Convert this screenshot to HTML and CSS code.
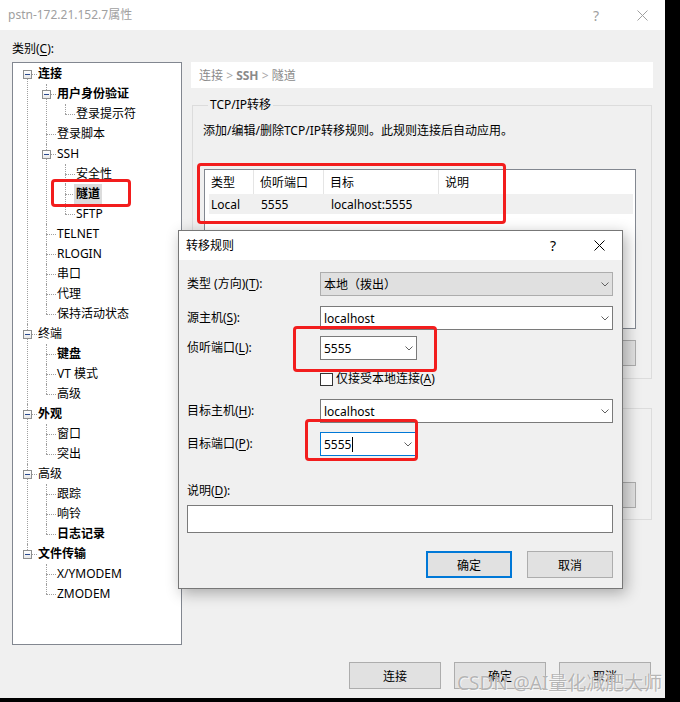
FILE: index.html
```html
<!DOCTYPE html>
<html lang="zh">
<head>
    <meta charset="UTF-8">
    <title>pstn-172.21.152.7属性</title>
    <link rel="stylesheet" href="styles.css">
</head>
<body>
    <div class="window">
        <div class="titlebar inactive">
            <span class="title">pstn-172.21.152.7属性</span>
            <span class="tb-btn">?</span>
            <span class="tb-btn">
                <svg width="11" height="11" viewBox="0 0 11 11"><path d="M0.5 0.5 L10.5 10.5 M10.5 0.5 L0.5 10.5" stroke="#a0a0a0" stroke-width="1" fill="none"/></svg>
            </span>
        </div>

        <div class="main">
            <div class="cat-label">类别(<u>C</u>):</div>
            <div class="content">
                <div class="tree">
                    <ul>
                        <li><div class="row"><span class="toggle"></span><span class="label bold">连接</span></div>
                            <ul>
                                <li><div class="row"><span class="toggle"></span><span class="label bold">用户身份验证</span></div>
                                    <ul>
                                        <li><div class="row leaf"><span class="label">登录提示符</span></div></li>
                                    </ul>
                                </li>
                                <li><div class="row leaf"><span class="label">登录脚本</span></div></li>
                                <li><div class="row"><span class="toggle"></span><span class="label">SSH</span></div>
                                    <ul>
                                        <li><div class="row leaf"><span class="label">安全性</span></div></li>
                                        <li><div class="row leaf"><span class="label bold sel">隧道</span></div></li>
                                        <li><div class="row leaf"><span class="label">SFTP</span></div></li>
                                    </ul>
                                </li>
                                <li><div class="row leaf"><span class="label">TELNET</span></div></li>
                                <li><div class="row leaf"><span class="label">RLOGIN</span></div></li>
                                <li><div class="row leaf"><span class="label">串口</span></div></li>
                                <li><div class="row leaf"><span class="label">代理</span></div></li>
                                <li><div class="row leaf"><span class="label">保持活动状态</span></div></li>
                            </ul>
                        </li>
                        <li><div class="row"><span class="toggle"></span><span class="label">终端</span></div>
                            <ul>
                                <li><div class="row leaf"><span class="label bold">键盘</span></div></li>
                                <li><div class="row leaf"><span class="label">VT 模式</span></div></li>
                                <li><div class="row leaf"><span class="label">高级</span></div></li>
                            </ul>
                        </li>
                        <li><div class="row"><span class="toggle"></span><span class="label bold">外观</span></div>
                            <ul>
                                <li><div class="row leaf"><span class="label">窗口</span></div></li>
                                <li><div class="row leaf"><span class="label">突出</span></div></li>
                            </ul>
                        </li>
                        <li><div class="row"><span class="toggle"></span><span class="label">高级</span></div>
                            <ul>
                                <li><div class="row leaf"><span class="label">跟踪</span></div></li>
                                <li><div class="row leaf"><span class="label">响铃</span></div></li>
                                <li><div class="row leaf"><span class="label bold">日志记录</span></div></li>
                            </ul>
                        </li>
                        <li><div class="row"><span class="toggle"></span><span class="label bold">文件传输</span></div>
                            <ul>
                                <li><div class="row leaf"><span class="label">X/YMODEM</span></div></li>
                                <li><div class="row leaf"><span class="label">ZMODEM</span></div></li>
                            </ul>
                        </li>
                    </ul>
                </div>

                <div class="panel">
                    <div class="crumb"><span>连接 <span class="sep">&gt;</span> <b>SSH</b> <span class="sep">&gt;</span> 隧道</span></div>

                    <fieldset class="group">
                        <legend>TCP/IP转移</legend>
                        <div class="desc">添加/编辑/删除TCP/IP转移规则。此规则连接后自动应用。</div>
                        <div class="list">
                            <div class="list-head">
                                <div class="col c1">类型</div>
                                <div class="col c2">侦听端口</div>
                                <div class="col c3">目标</div>
                                <div class="col c4">说明</div>
                            </div>
                            <div class="list-row">
                                <div class="col c1">Local</div>
                                <div class="col c2">5555</div>
                                <div class="col c3">localhost:5555</div>
                                <div class="col c4"></div>
                            </div>
                        </div>
                        <div class="btn-row">
                            <button class="btn small">添加(A)...</button>
                            <button class="btn small">编辑(E)...</button>
                            <button class="btn small">删除(R)</button>
                        </div>
                    </fieldset>

                    <fieldset class="group second">
                        <legend>X11转移</legend>
                        <div class="x11-body">转发X11连接到(X):</div>
                        <div class="btn-row tight">
                            <button class="btn small">浏览(B)...</button>
                        </div>
                    </fieldset>
                </div>
            </div>

            <div class="footer">
                <button class="btn wide">连接</button>
                <button class="btn wide">确定</button>
                <button class="btn wide">取消</button>
            </div>
        </div>

        <div class="dialog">
            <div class="titlebar dlg-title">
                <span class="title">转移规则</span>
                <span class="tb-btn">?</span>
                <span class="tb-btn">
                    <svg width="11" height="11" viewBox="0 0 11 11"><path d="M0.5 0.5 L10.5 10.5 M10.5 0.5 L0.5 10.5" stroke="#000" stroke-width="1" fill="none"/></svg>
                </span>
            </div>
            <div class="dlg-body">
                <div class="drow r1">
                    <span class="dlabel">类型 (方向)(<u>T</u>):</span>
                    <div class="combo disabled">本地（拨出）<svg class="arrow" width="8" height="5" viewBox="0 0 8 5"><path d="M0.5 0.5 L4 4 L7.5 0.5" stroke="#606060" fill="none"/></svg></div>
                </div>
                <div class="drow r2">
                    <span class="dlabel">源主机(<u>S</u>):</span>
                    <div class="combo">localhost<svg class="arrow" width="8" height="5" viewBox="0 0 8 5"><path d="M0.5 0.5 L4 4 L7.5 0.5" stroke="#606060" fill="none"/></svg></div>
                </div>
                <div class="drow r3">
                    <span class="dlabel">侦听端口(<u>L</u>):</span>
                    <div class="combo short">5555<svg class="arrow" width="8" height="5" viewBox="0 0 8 5"><path d="M0.5 0.5 L4 4 L7.5 0.5" stroke="#606060" fill="none"/></svg></div>
                </div>
                <div class="check-row">
                    <span class="checkbox"></span>
                    <span>仅接受本地连接(<u>A</u>)</span>
                </div>
                <div class="drow r4">
                    <span class="dlabel">目标主机(<u>H</u>):</span>
                    <div class="combo">localhost<svg class="arrow" width="8" height="5" viewBox="0 0 8 5"><path d="M0.5 0.5 L4 4 L7.5 0.5" stroke="#606060" fill="none"/></svg></div>
                </div>
                <div class="drow r5">
                    <span class="dlabel">目标端口(<u>P</u>):</span>
                    <div class="combo short focus">5555<span class="caret"></span><svg class="arrow" width="8" height="5" viewBox="0 0 8 5"><path d="M0.5 0.5 L4 4 L7.5 0.5" stroke="#606060" fill="none"/></svg></div>
                </div>
                <div class="note-label">说明(<u>D</u>):</div>
                <div class="note-input"></div>
                <div class="dlg-buttons">
                    <button class="btn dbtn default">确定</button>
                    <button class="btn dbtn">取消</button>
                </div>
            </div>
        </div>

        <!-- red annotation frames -->
        <div class="mark mark-tree"></div>
        <div class="mark mark-list"></div>
        <div class="mark mark-listen"></div>
        <div class="mark mark-target"></div>

        <div class="watermark">CSDN @AI量化减肥大师</div>
    </div>
</body>
</html>
```

FILE: styles.css
```css
body {
    margin: 0;
    background: #000;
    font-family: "Noto Sans", "Noto Sans CJK SC", sans-serif;
    font-size: 12px;
    color: #000;
}
u {
    text-decoration: underline;
    text-underline-offset: 2px;
}
.window {
    position: relative;
    width: 665px;
    height: 698px;
    background: #f0f0f0;
    overflow: hidden;
}
.titlebar {
    display: flex;
    align-items: center;
    height: 30px;
    background: #fff;
    padding-left: 8px;
}
.titlebar .title {
    flex: 1;
    line-height: 16px;
}
.titlebar.inactive .title,
.titlebar.inactive .tb-btn {
    color: #a0a0a0;
}
.tb-btn {
    width: 46px;
    height: 100%;
    display: flex;
    align-items: center;
    justify-content: center;
    font-size: 14px;
}
.main {
    padding: 11px 0 0 12px;
}
.cat-label {
    line-height: 16px;
    height: 16px;
    margin-bottom: 5px;
}
.content {
    display: flex;
    gap: 9px;
}

/* tree */
.tree {
    width: 170px;
    height: 583px;
    box-sizing: border-box;
    border: 1px solid #828790;
    background: #fff;
    overflow: hidden;
    flex: none;
    padding-top: 1px;
}
.tree ul {
    list-style: none;
    margin: 0;
    padding: 0;
}
.tree ul ul {
    padding-left: 19px;
}
.tree li {
    position: relative;
}
.tree li::before {
    content: "";
    position: absolute;
    left: 14px;
    top: 10px;
    width: 10px;
    border-top: 1px dotted #a0a0a0;
}
.tree li::after {
    content: "";
    position: absolute;
    left: 14px;
    top: 0;
    bottom: 0;
    border-left: 1px dotted #a0a0a0;
}
.tree li:last-child::after {
    bottom: auto;
    height: 10px;
}
.tree > ul > li:first-child::after {
    top: 10px;
}
.row {
    display: flex;
    align-items: center;
    height: 20px;
    padding-left: 10px;
}
.row.leaf {
    padding-left: 25px;
}
.toggle {
    position: relative;
    z-index: 1;
    flex: none;
    width: 9px;
    height: 9px;
    box-sizing: border-box;
    border: 1px solid #8e8f8f;
    background: linear-gradient(#fff, #e8e8e8);
    margin-right: 6px;
}
.toggle::after {
    content: "";
    position: absolute;
    left: 1px;
    top: 3px;
    width: 5px;
    height: 1px;
    background: #2a4a8f;
}
.label {
    position: relative;
    z-index: 1;
    line-height: 16px;
    padding: 2px 2px;
    margin-left: -2px;
    white-space: nowrap;
}
.bold {
    font-weight: bold;
}
.label.sel {
    background: #dcdcdc;
}

/* right panel */
.panel {
    width: 462px;
    flex: none;
}
.crumb {
    height: 26px;
    background: #fff;
    display: flex;
    align-items: center;
    padding-left: 8px;
    color: #8a8a8a;
    white-space: pre;
}
.crumb .sep {
    color: #a8a8a8;
}
.group {
    margin: 9px 1px 0 1px;
    padding: 10px 15px 12px 10px;
    border: 1px solid #dcdcdc;
    min-width: 0;
}
.group legend {
    padding: 0 2px;
    margin-left: 5px;
    line-height: 16px;
}
.group.second {
    margin-top: 21px;
    padding-bottom: 11px;
}
.desc {
    line-height: 16px;
}
.list {
    margin: 30px 0 0 1px;
    height: 160px;
    box-sizing: border-box;
    border: 1px solid #828790;
    background: #fff;
}
.list-head {
    display: flex;
    height: 24px;
    align-items: center;
}
.list-head .col {
    height: 100%;
    display: flex;
    align-items: center;
    box-sizing: border-box;
    border-right: 1px solid #e5e5e5;
    padding-left: 6px;
}
.list-head .c1 { width: 49px; }
.list-head .c2 { width: 70px; }
.list-head .c3 { width: 115px; }
.list-head .c4 { flex: 1; border-right: none; }
.list-row {
    display: flex;
    align-items: center;
    height: 20px;
    margin: 0 2px 0 4px;
    background: #f0f0f0;
}
.list-row .col {
    box-sizing: border-box;
    padding-left: 7px;
    white-space: nowrap;
}
.list-row .c1 { width: 45px; padding-left: 2px; }
.list-row .c2 { width: 70px; }
.list-row .c3 { width: 115px; }
.list-row .c4 { flex: 1; }
.btn-row {
    display: flex;
    justify-content: flex-end;
    gap: 7px;
    margin-top: 11px;
}
.x11-body {
    height: 56px;
    line-height: 16px;
}
.btn-row.tight {
    margin-top: 0;
}
.btn {
    font: inherit;
    color: #000;
    background: #e1e1e1;
    border: 1px solid #adadad;
    padding: 0;
    box-sizing: border-box;
}
.btn.small {
    width: 75px;
    height: 26px;
}
.btn.wide {
    width: 92px;
    height: 27px;
}
.footer {
    display: flex;
    justify-content: flex-end;
    gap: 13px;
    margin-top: 17px;
    padding-right: 14px;
}

/* dialog */
.dialog {
    position: absolute;
    left: 178px;
    top: 230px;
    width: 445px;
    height: 359px;
    box-sizing: border-box;
    border: 1px solid #777;
    background: #f0f0f0;
    box-shadow: 3px 4px 14px rgba(0, 0, 0, 0.3);
}
.dlg-title {
    height: 29px;
    padding-left: 7px;
}
.dlg-body {
    padding: 12px 9px 0 8px;
}
.drow {
    display: flex;
    align-items: center;
    height: 24px;
}
.r2 { margin-top: 10px; }
.r3 { margin-top: 6px; }
.r4 { margin-top: 12px; }
.r5 { margin-top: 9px; }
.dlabel {
    width: 133px;
    flex: none;
    line-height: 16px;
}
.combo {
    flex: none;
    width: 293px;
    height: 24px;
    box-sizing: border-box;
    border: 1px solid #7a7a7a;
    background: #fff;
    display: flex;
    align-items: center;
    padding-left: 3px;
    padding-right: 3px;
}
.combo .arrow {
    margin-left: auto;
}
.combo.disabled {
    background: #e0e0e0;
    border-color: #adadad;
}
.combo.short {
    width: 97px;
    padding-right: 3px;
}
.combo.focus {
    width: 96px;
    border-color: #0078d7;
}
.caret {
    width: 1px;
    height: 15px;
    background: #000;
    margin-left: 1px;
}
.check-row {
    display: flex;
    align-items: center;
    gap: 3px;
    height: 16px;
    margin-top: 11px;
    margin-left: 133px;
    line-height: 16px;
}
.checkbox {
    width: 13px;
    height: 13px;
    box-sizing: border-box;
    border: 1px solid #333;
    background: #fff;
}
.note-label {
    margin-top: 27px;
    line-height: 16px;
}
.note-input {
    margin-top: 6px;
    height: 28px;
    box-sizing: border-box;
    border: 1px solid #7a7a7a;
    background: #fff;
}
.dlg-buttons {
    display: flex;
    justify-content: flex-end;
    gap: 15px;
    margin-top: 18px;
}
.dbtn {
    width: 86px;
    height: 27px;
}
.dbtn.default {
    border: 2px solid #0078d7;
}

/* annotations */
.mark {
    position: absolute;
    box-sizing: border-box;
    border: 3px solid #f21d1d;
    border-radius: 4px;
}
.mark-tree { left: 51px; top: 179px; width: 80px; height: 28px; }
.mark-list { left: 197px; top: 163px; width: 309px; height: 61px; }
.mark-listen { left: 293px; top: 326px; width: 144px; height: 46px; }
.mark-target { left: 305px; top: 419px; width: 113px; height: 42px; }

.watermark {
    position: absolute;
    left: 457px;
    top: 671px;
    font-size: 19px;
    line-height: 24px;
    color: rgba(110, 110, 110, 0.5);
    text-shadow: 0 0 1px #fff, 1px 1px 0 rgba(255, 255, 255, 0.6);
    white-space: nowrap;
}
```
